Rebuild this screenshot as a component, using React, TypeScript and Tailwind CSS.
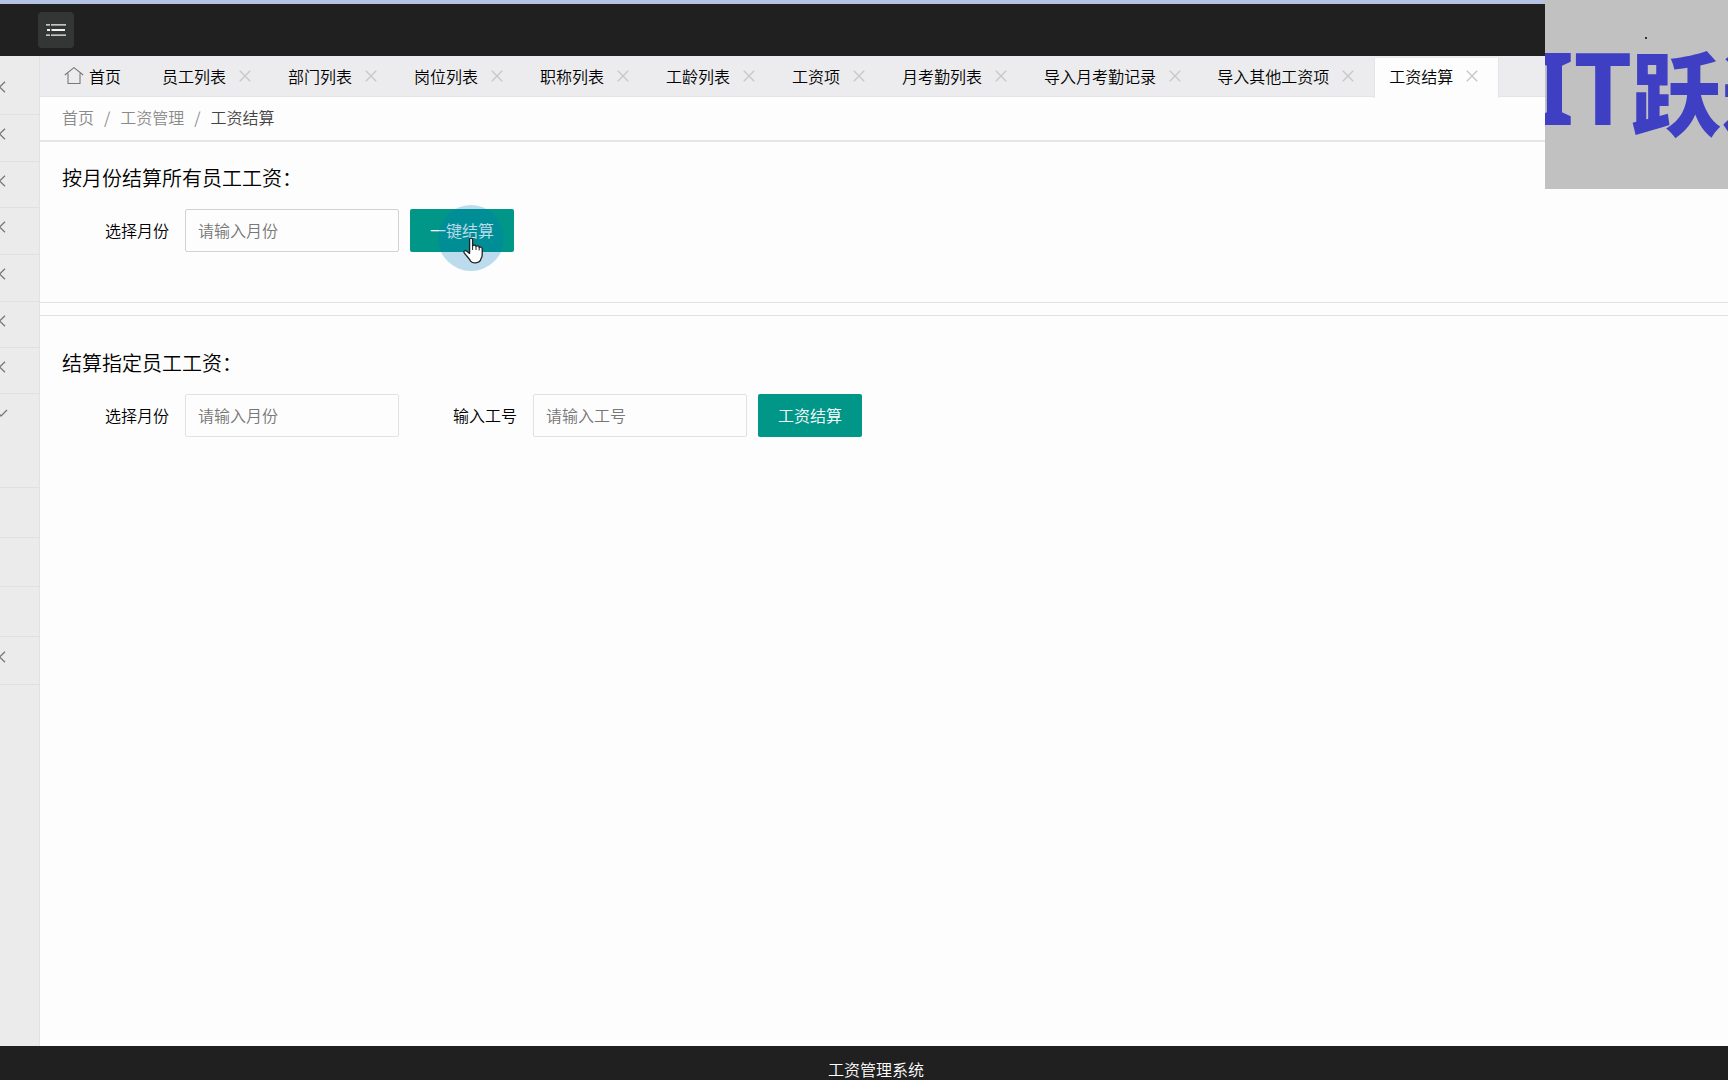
import React from 'react';

const tabs = ['员工列表', '部门列表', '岗位列表', '职称列表', '工龄列表', '工资项', '月考勤列表', '导入月考勤记录', '导入其他工资项', '工资结算'];

const rows = [
  { h: 'h-[59px]', icon: 'left', pad: 'pt-1' },
  { h: 'h-[47px]', icon: 'left', pad: 'pb-2' },
  { h: 'h-[46px]', icon: 'left', pad: 'pb-2' },
  { h: 'h-[47px]', icon: 'left', pad: 'pb-2' },
  { h: 'h-[47px]', icon: 'left', pad: 'pb-2' },
  { h: 'h-[46px]', icon: 'left', pad: 'pb-2' },
  { h: 'h-[46px]', icon: 'left', pad: 'pb-2' },
  { h: 'h-[94px]', icon: 'down', pad: 'pb-14' },
  { h: 'h-[50px]', icon: '', pad: '' },
  { h: 'h-[49px]', icon: '', pad: '' },
  { h: 'h-[50px]', icon: '', pad: '' },
  { h: 'h-[48px]', icon: 'left', pad: 'pb-2' },
];

function Chevron({ kind }: { kind: string }) {
  return (
    <svg className="h-3 w-2" viewBox="0 0 8 12" fill="none" stroke="#777" strokeWidth="1.3">
      {kind === 'left' ? <path d="M5 .8 L-.5 6 L5 11.2" /> : <path d="M-4 3.5 L1 9 L7 3" />}
    </svg>
  );
}

function Close() {
  return (
    <svg className="h-3 w-3" viewBox="0 0 12 12" fill="none" stroke="#c8c8cb" strokeWidth="1.4">
      <path d="M.8 .8 L11.2 11.2 M11.2 .8 L.8 11.2" />
    </svg>
  );
}

function Field({ id, label, placeholder, strong }: { id: string; label: string; placeholder: string; strong?: boolean }) {
  return (
    <div className="flex items-center">
      <label htmlFor={id} className="w-[123px] pr-4 pb-0.5 text-right text-black">
        {label}
      </label>
      <input
        id={id}
        placeholder={placeholder}
        className={
          'h-[43px] w-[214px] rounded-xs border bg-[#fdfdfd] px-3 pb-0.5 outline-none placeholder:text-[#777] ' +
          (strong ? 'border-[#d2d2d2]' : 'border-[#e2e2e2]')
        }
      />
    </div>
  );
}

function Pointer() {
  return (
    <div className="pointer-events-none absolute -top-1 left-7 h-[66px] w-[66px]">
      <div className="absolute inset-0 rounded-full bg-[#0078be]/26" />
      <svg className="absolute left-6 top-8 h-7 w-6" viewBox="0 0 24 28" fill="#fff" stroke="#222" strokeWidth="1.3" strokeLinejoin="round">
        <path d="M7.6 2.4 C7.6 .6 10.6 .6 10.6 2.4 V9 C11.2 7.6 14 7.8 14 9.4 C14.8 8.4 17.2 8.8 17.2 10.4 C18.2 9.6 20.2 10.2 20.2 12 V18 C20.2 20.6 18.6 21.6 18.6 23 C17 26.4 10.6 26.6 8.8 24.4 C7.4 21.4 4.4 19 2.2 15.8 C1.2 14 3.2 12.8 4.8 14.2 L7.6 16.4 Z" />
        <path d="M10.6 9 V13 M14 9.6 V13 M17.2 10.6 V13.4" strokeWidth="1" />
      </svg>
    </div>
  );
}

function Submit({ children }: { children: React.ReactNode }) {
  return (
    <button type="button" className="h-[43px] w-[104px] rounded-xs bg-[#009688] pb-0.5 text-white">
      {children}
    </button>
  );
}

export default function App() {
  return (
    <div className="relative flex h-screen flex-col overflow-hidden bg-[#fdfdfd] text-base font-[350] font-['Noto_Sans_CJK_SC',sans-serif]">
      <header className="flex h-14 shrink-0 items-center border-t-4 border-[#b4c3e2] bg-[#202020] pl-[38px]">
        <button type="button" aria-label="菜单" className="flex h-9 w-9 items-center justify-center rounded-sm bg-[#343535]">
          <svg className="h-3 w-5" viewBox="0 0 20 12" stroke="#f2f2f2" strokeWidth="1.2">
            <path d="M0 .8 H4 M5 .8 H20 M0 11.2 H4 M5 11.2 H20" />
            <path d="M1 6 H4 M5.5 6 H19" strokeWidth="2" />
          </svg>
        </button>
      </header>

      <div className="flex min-h-0 flex-1">
        <aside className="w-10 shrink-0 border-r border-[#e2e2e2] bg-[#ebebeb]">
          {rows.map((r, i) => (
            <div key={i} className={'flex items-center border-b border-[#e0e0e0] ' + r.h + ' ' + r.pad}>
              {r.icon && <Chevron kind={r.icon} />}
            </div>
          ))}
        </aside>

        <main className="min-w-0 flex-1">
          <nav className="flex h-[41px] border-b border-[#e4e4e4] bg-[#ececee] text-black">
            <a href="#home" className="flex w-[106px] shrink-0 items-center pl-6">
              <svg className="mr-[5px] h-5 w-5" viewBox="0 0 20 20" fill="none" stroke="#777" strokeWidth="1.1">
                <path d="M.8 9 L10 1.6 L19.2 9 M4 7.5 V17.5 H16 V7.5" />
              </svg>
              首页
            </a>
            {tabs.map((t, i) => {
              const active = i === tabs.length - 1;
              return (
                <div
                  key={t}
                  className={
                    'flex shrink-0 items-center gap-[13px] ' +
                    (active
                      ? 'mt-0.5 h-10 border-x border-[#e4e4e4] bg-[#fdfdfd] pl-3.5 pr-5 pb-1'
                      : 'pl-4 ' + (t.length > 5 ? 'pr-5' : 'pr-[21px]'))
                  }
                >
                  <a href={'#tab' + i}>{t}</a>
                  <button type="button" aria-label={'关闭' + t}>
                    <Close />
                  </button>
                </div>
              );
            })}
          </nav>

          <div className="flex h-[45px] items-center gap-2.5 border-b-2 border-[#e5e5e5] px-[22px] pb-1 text-[#8a8a8a]">
            <a href="#home">首页</a>
            <span>/</span>
            <a href="#salary">工资管理</a>
            <span>/</span>
            <span className="text-[#444]">工资结算</span>
          </div>

          <section className="h-[161px] border-b border-[#e2e2e2] px-[22px] pt-5">
            <h2 className="text-xl leading-8 text-black">按月份结算所有员工工资：</h2>
            <form className="mt-[15px] flex gap-[11px]">
              <Field id="month-all" label="选择月份" placeholder="请输入月份" strong />
              <div className="relative">
                <Submit>一键结算</Submit>
                <Pointer />
              </div>
            </form>
          </section>

          <section className="mt-3 border-t border-[#e2e2e2] px-[22px] pt-[31px]">
            <h2 className="text-xl leading-8 text-black">结算指定员工工资：</h2>
            <form className="mt-[15px] flex gap-[11px]">
              <Field id="month-one" label="选择月份" placeholder="请输入月份" />
              <Field id="job-no" label="输入工号" placeholder="请输入工号" />
              <Submit>工资结算</Submit>
            </form>
          </section>
        </main>
      </div>

      <footer className="flex h-[34px] shrink-0 justify-center bg-[#202020] pt-3 pl-6 text-white leading-[22px]">工资管理系统</footer>

      <div className="absolute right-0 top-0 h-[189px] w-[183px] overflow-hidden bg-[#c1c1c1] text-[#3f3fc4]">
        <span className="absolute left-[100px] top-[37px] h-0.5 w-0.5 bg-[#333]" />
        <div className="absolute -left-2.5 top-0 flex items-start whitespace-nowrap">
          <span className="font-['Noto_Sans',sans-serif] text-[100px] leading-[172px] font-bold">IT</span>
          <span className="text-[90px] leading-[178px] font-black">跃迁</span>
        </div>
      </div>
    </div>
  );
}
